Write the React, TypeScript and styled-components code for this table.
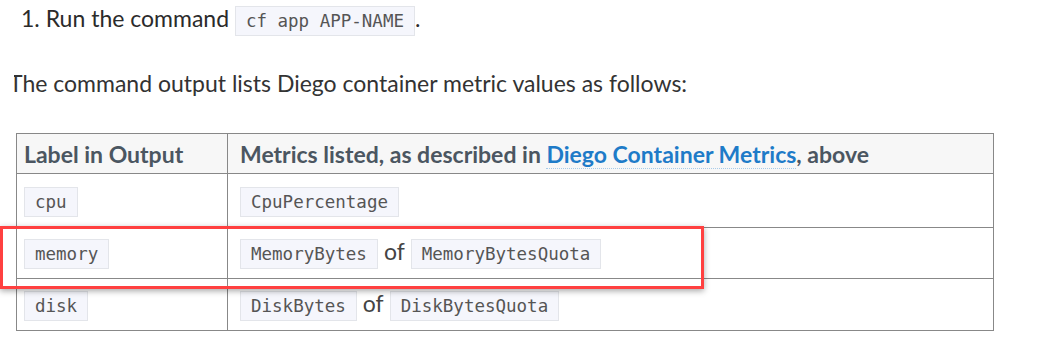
import React from "react";
import styled, { createGlobalStyle } from "styled-components";

const GlobalStyle = createGlobalStyle`
  html, body {
    margin: 0;
    padding: 0;
    background: #ffffff;
  }
  body {
    width: 1060px;
    height: 344px;
    overflow: hidden;
    font-family: Lato, "Open Sans", sans-serif;
    color: #333333;
  }
`;

const Page = styled.div`
  position: relative;
  width: 1060px;
  height: 344px;
  overflow: hidden;
`;

const StepList = styled.ol`
  margin: 0;
  padding: 3px 0 0 21px;
  list-style: none;
`;

const Step = styled.li`
  font-size: 23px;
  line-height: 30px;
  color: #2b2b2b;
`;

const Clip = styled.div`
  margin: 32px 0 0 14px;
  overflow: hidden;
`;

const Paragraph = styled.p`
  margin: 0 0 0 -5px;
  font-size: 23px;
  line-height: 30px;
  color: #333333;
  white-space: nowrap;
`;

const Code = styled.code`
  display: inline-block;
  font-family: "DejaVu Sans Mono", "Liberation Mono", monospace;
  font-size: 17.5px;
  line-height: 28px;
  padding: 0 10px;
  background: #f5f6fc;
  border: 1px solid #e3e5ea;
  color: #555555;
  vertical-align: middle;
`;

const Table = styled.table`
  margin: 35px 0 0 16px;
  width: 978px;
  border-collapse: collapse;
  font-size: 23px;
`;

const HeadCell = styled.th<{ $pad: number }>`
  text-align: left;
  font-weight: 700;
  color: #4b5661;
  background: #f7f7f7;
  border: 1px solid #888888;
  height: 39px;
  padding: 0 0 0 ${(p) => p.$pad}px;
`;

const Cell = styled.td<{ $pad: number; $h: number }>`
  border: 1px solid #888888;
  height: ${(p) => p.$h}px;
  padding: 0 0 0 ${(p) => p.$pad}px;
  color: #444444;
  white-space: nowrap;
`;

const Of = styled.span`
  margin: 0 6px;
  font-size: 23px;
  color: #444444;
`;

const Link = styled.a`
  color: #1e7bc8;
  text-decoration: none;
  border-bottom: 1px dotted #a8cbe8;
`;

const Highlight = styled.div`
  position: absolute;
  left: 0;
  top: 226px;
  width: 698px;
  height: 57px;
  border: 3px solid #ff4040;
  box-shadow: 0 2px 6px rgba(0, 0, 0, 0.35);
  pointer-events: none;
`;

const rows = [
  { label: "cpu", metric: ["CpuPercentage"], h: 53 },
  { label: "memory", metric: ["MemoryBytes", "MemoryBytesQuota"], h: 50 },
  { label: "disk", metric: ["DiskBytes", "DiskBytesQuota"], h: 51 },
];

export default function App() {
  return (
    <Page>
      <GlobalStyle />
      <StepList>
        <Step>
          1. Run the command <Code>cf app APP-NAME</Code>.
        </Step>
      </StepList>
      <Clip>
        <Paragraph>
          The command output lists Diego container metric values as follows:
        </Paragraph>
      </Clip>
      <Table>
        <thead>
          <tr>
            <HeadCell $pad={7} style={{ width: "203px" }}>
              Label in Output
            </HeadCell>
            <HeadCell $pad={12}>
              Metrics listed, as described in{" "}
              <Link href="#">Diego Container Metrics</Link>, above
            </HeadCell>
          </tr>
        </thead>
        <tbody>
          {rows.map((r) => (
            <tr key={r.label}>
              <Cell $pad={7} $h={r.h}>
                <Code>{r.label}</Code>
              </Cell>
              <Cell $pad={12} $h={r.h}>
                <Code>{r.metric[0]}</Code>
                {r.metric[1] && (
                  <>
                    <Of>of</Of>
                    <Code>{r.metric[1]}</Code>
                  </>
                )}
              </Cell>
            </tr>
          ))}
        </tbody>
      </Table>
      <Highlight />
    </Page>
  );
}
